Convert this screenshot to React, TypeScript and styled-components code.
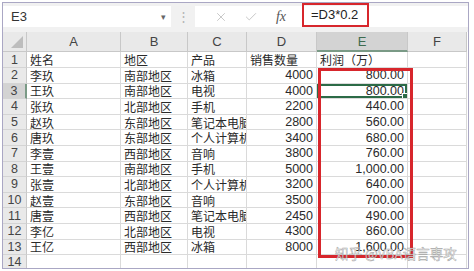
import styled, { createGlobalStyle } from "styled-components";
import { X, Check } from "lucide-react";

const GlobalStyle = createGlobalStyle`
  html, body {
    margin: 0;
    padding: 0;
    background: #ffffff;
  }
  * {
    box-sizing: border-box;
  }
`;

type Row = [string, string, string, string, string];

//표 데이터
const rows: Row[] = [
  ["姓名", "地区", "产品", "销售数量", "利润（万）"],
  ["李玖", "南部地区", "冰箱", "4000", "800.00"],
  ["王玖", "南部地区", "电视", "4000", "800.00"],
  ["张玖", "北部地区", "手机", "2200", "440.00"],
  ["赵玖", "东部地区", "笔记本电脑", "2800", "560.00"],
  ["唐玖", "东部地区", "个人计算机", "3400", "680.00"],
  ["李壹", "西部地区", "音响", "3800", "760.00"],
  ["王壹", "南部地区", "手机", "5000", "1,000.00"],
  ["张壹", "北部地区", "个人计算机", "3200", "640.00"],
  ["赵壹", "东部地区", "音响", "3500", "700.00"],
  ["唐壹", "西部地区", "笔记本电脑", "2450", "490.00"],
  ["李亿", "北部地区", "电视", "4300", "860.00"],
  ["王亿", "西部地区", "冰箱", "8000", "1,600.00"],
  ["", "", "", "", ""],
];

const letters = ["A", "B", "C", "D", "E", "F"];

export default function App() {
  return (
    <>
      <GlobalStyle />
      <Frame>
        <FormulaBar>
          <NameBox>
            E3
            <Caret>▾</Caret>
          </NameBox>
          <Dots>⋮</Dots>
          <InputArea>
            <ToolBtn>
              <X size={14} strokeWidth={1.1} />
            </ToolBtn>
            <ToolBtn>
              <Check size={14} strokeWidth={1.1} />
            </ToolBtn>
            <Fx>fx</Fx>
            <Formula>=D3*0.2</Formula>
          </InputArea>
        </FormulaBar>

        <Sheet>
          <Corner>
            <CornerMark />
          </Corner>
          {letters.map((l) => (
            <ColHead key={l} $active={l === "E"}>
              {l}
            </ColHead>
          ))}

          {rows.map((row, i) => {
            const n = i + 1;
            return [
              <RowHead key={`h${n}`} $active={n === 3}>
                {n}
              </RowHead>,
              <Cell key={`a${n}`}>{row[0]}</Cell>,
              <Cell key={`b${n}`}>{row[1]}</Cell>,
              <Cell key={`c${n}`}>{row[2]}</Cell>,
              <Cell key={`d${n}`} $num={n > 1}>
                {row[3]}
              </Cell>,
              <Cell key={`e${n}`} $num={n > 1} $selected={n === 3}>
                {row[4]}
                {n === 3 && <FillHandle />}
              </Cell>,
              <Cell key={`f${n}`} />,
            ];
          })}

          <RedBox />
        </Sheet>

        <Watermark>知乎 @VBA语言専攻</Watermark>
      </Frame>
    </>
  );
}

const Frame = styled.div`
  position: relative;
  margin: 2px 0 0 2px;
  width: 467px;
  height: 267px;
  border: 1px solid #aaa7c4;
  background: #f1f1f1;
  overflow: hidden;
  font-family: "Liberation Sans", "Noto Sans CJK SC", sans-serif;
`;

const FormulaBar = styled.div`
  display: flex;
  align-items: center;
  height: 25px;
  padding-top: 2px;
`;

const NameBox = styled.div`
  display: flex;
  align-items: center;
  justify-content: space-between;
  width: 168px;
  height: 21px;
  padding: 0 5px 0 8px;
  background: #ffffff;
  font-size: 13px;
  color: #333;
`;

const Caret = styled.span`
  font-size: 9px;
  color: #666;
`;

const Dots = styled.div`
  width: 24px;
  text-align: center;
  font-size: 13px;
  color: #b4b4b4;
`;

const InputArea = styled.div`
  display: flex;
  align-items: center;
  flex: 1;
  height: 21px;
  background: #ffffff;
  padding-left: 11px;
`;

const ToolBtn = styled.span`
  display: flex;
  align-items: center;
  justify-content: center;
  width: 30px;
  color: #a9a9a9;
`;

const Fx = styled.span`
  width: 30px;
  text-align: center;
  font-family: "Liberation Serif", serif;
  font-style: italic;
  font-size: 14px;
  color: #555;
`;

const Formula = styled.span`
  display: flex;
  align-items: center;
  width: 67px;
  height: 24px;
  margin: -4px 0 0 6px;
  padding-left: 7px;
  border: 2.5px solid #d7262c;
  font-size: 13px;
  color: #222;
`;

const Sheet = styled.div`
  position: relative;
  display: grid;
  grid-template-columns: 24px 94px 67px 59px 70px 91px 59px;
  grid-template-rows: 20px 16px repeat(13, 15.6px);
  margin-top: 4px;
  background: #ffffff;
`;

const Corner = styled.div`
  position: relative;
  background: #e9e9e9;
  border-right: 1px solid #c8c8c8;
  border-bottom: 1px solid #c8c8c8;
`;

const CornerMark = styled.div`
  position: absolute;
  right: 3px;
  bottom: 3px;
  width: 12px;
  height: 12px;
  background: #bdbdbd;
  clip-path: polygon(100% 0, 100% 100%, 0 100%);
`;

const ColHead = styled.div<{ $active?: boolean }>`
  display: flex;
  align-items: center;
  justify-content: center;
  background: ${({ $active }) => ($active ? "#d3d3d3" : "#e9e9e9")};
  border-right: 1px solid #c8c8c8;
  border-bottom: ${({ $active }) =>
    $active ? "2px solid #7a9a86" : "1px solid #c8c8c8"};
  font-size: 13px;
  color: ${({ $active }) => ($active ? "#3d6b4f" : "#444")};
`;

const RowHead = styled.div<{ $active?: boolean }>`
  display: flex;
  align-items: center;
  justify-content: center;
  background: ${({ $active }) => ($active ? "#d3d3d3" : "#e9e9e9")};
  border-right: ${({ $active }) =>
    $active ? "2px solid #7a9a86" : "1px solid #c8c8c8"};
  border-bottom: 1px solid #d4d4d4;
  font-size: 12.5px;
  color: #444;
`;

const Cell = styled.div<{ $num?: boolean; $selected?: boolean }>`
  position: relative;
  display: flex;
  align-items: center;
  justify-content: ${({ $num }) => ($num ? "flex-end" : "flex-start")};
  padding: ${({ $num }) => ($num ? "0 3px 0 0" : "0 0 0 3px")};
  border-right: 1px solid #dadada;
  border-bottom: 1px solid #dadada;
  box-shadow: ${({ $selected }) =>
    $selected ? "inset 0 0 0 2px #2c6b47" : "none"};
  overflow: hidden;
  white-space: nowrap;
  font-size: ${({ $num }) => ($num ? "12.5px" : "12px")};
  color: #2a2a2a;
`;

const FillHandle = styled.span`
  position: absolute;
  right: 0;
  bottom: 0;
  width: 5px;
  height: 5px;
  background: #2c6b47;
  border-left: 1px solid #fff;
  border-top: 1px solid #fff;
`;

const RedBox = styled.div`
  position: absolute;
  left: 315px;
  top: 36px;
  width: 95px;
  height: 190px;
  border: 3px solid #d7262c;
  pointer-events: none;
`;

const Watermark = styled.div`
  position: absolute;
  left: 332px;
  top: 240px;
  font-family: "Noto Sans CJK SC", sans-serif;
  font-size: 13.5px;
  color: rgba(255, 255, 255, 0.8);
  -webkit-text-stroke: 0.5px rgba(120, 120, 120, 0.7);
  white-space: nowrap;
`;
